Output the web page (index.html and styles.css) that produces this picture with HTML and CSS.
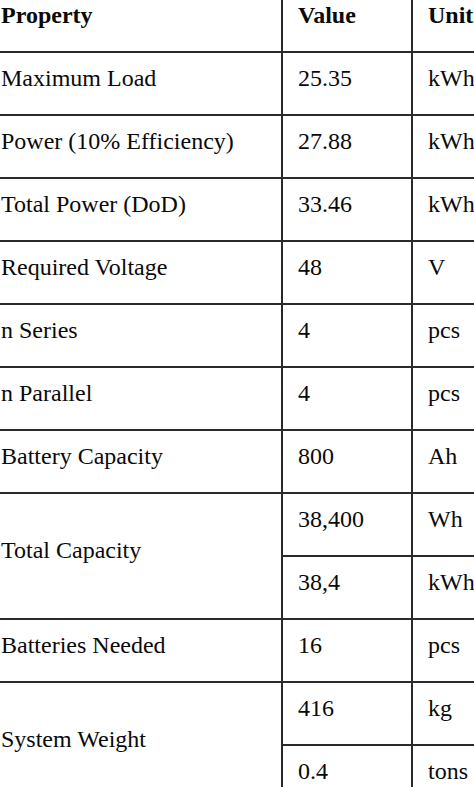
FILE: index.html
```html
<!DOCTYPE html>
<html>
<head>
<meta charset="utf-8">
<link rel="stylesheet" href="styles.css">
</head>
<body>
<table class="spec">
  <colgroup>
    <col class="c-prop">
    <col class="c-val">
    <col class="c-unit">
  </colgroup>
  <thead>
    <tr><th>Property</th><th>Value</th><th>Unit</th></tr>
  </thead>
  <tbody>
    <tr><td>Maximum Load</td><td>25.35</td><td>kWh</td></tr>
    <tr><td>Power (10% Efficiency)</td><td>27.88</td><td>kWh</td></tr>
    <tr><td>Total Power (DoD)</td><td>33.46</td><td>kWh</td></tr>
    <tr><td>Required Voltage</td><td>48</td><td>V</td></tr>
    <tr><td>n Series</td><td>4</td><td>pcs</td></tr>
    <tr><td>n Parallel</td><td>4</td><td>pcs</td></tr>
    <tr><td>Battery Capacity</td><td>800</td><td>Ah</td></tr>
    <tr><td rowspan="2" class="span">Total Capacity</td><td>38,400</td><td>Wh</td></tr>
    <tr><td>38,4</td><td>kWh</td></tr>
    <tr><td>Batteries Needed</td><td>16</td><td>pcs</td></tr>
    <tr><td rowspan="2" class="span">System Weight</td><td>416</td><td>kg</td></tr>
    <tr><td>0.4</td><td>tons</td></tr>
  </tbody>
</table>
</body>
</html>
```
FILE: styles.css
```css
html, body {
  margin: 0;
  padding: 0;
  overflow: hidden;
  background: #ffffff;
}

.spec {
  border-collapse: collapse;
  table-layout: fixed;
  width: 557px;
  margin: -12px 0 0 -16px;
  font-family: "Liberation Serif", "Times New Roman", serif;
  font-size: 24px;
  color: #0a0a0a;
}

.c-prop { width: 297px; }
.c-val { width: 130px; }
.c-unit { width: 130px; }

.spec th,
.spec td {
  border: 2px solid #2a2a2a;
  padding: 12px 15px 22px 15px;
  line-height: 27px;
  height: 27px;
  text-align: left;
  vertical-align: top;
  white-space: nowrap;
  overflow: hidden;
}

.spec th {
  font-weight: bold;
}

.spec td.span {
  vertical-align: middle;
  padding-top: 0;
  padding-bottom: 12px;
}
```
